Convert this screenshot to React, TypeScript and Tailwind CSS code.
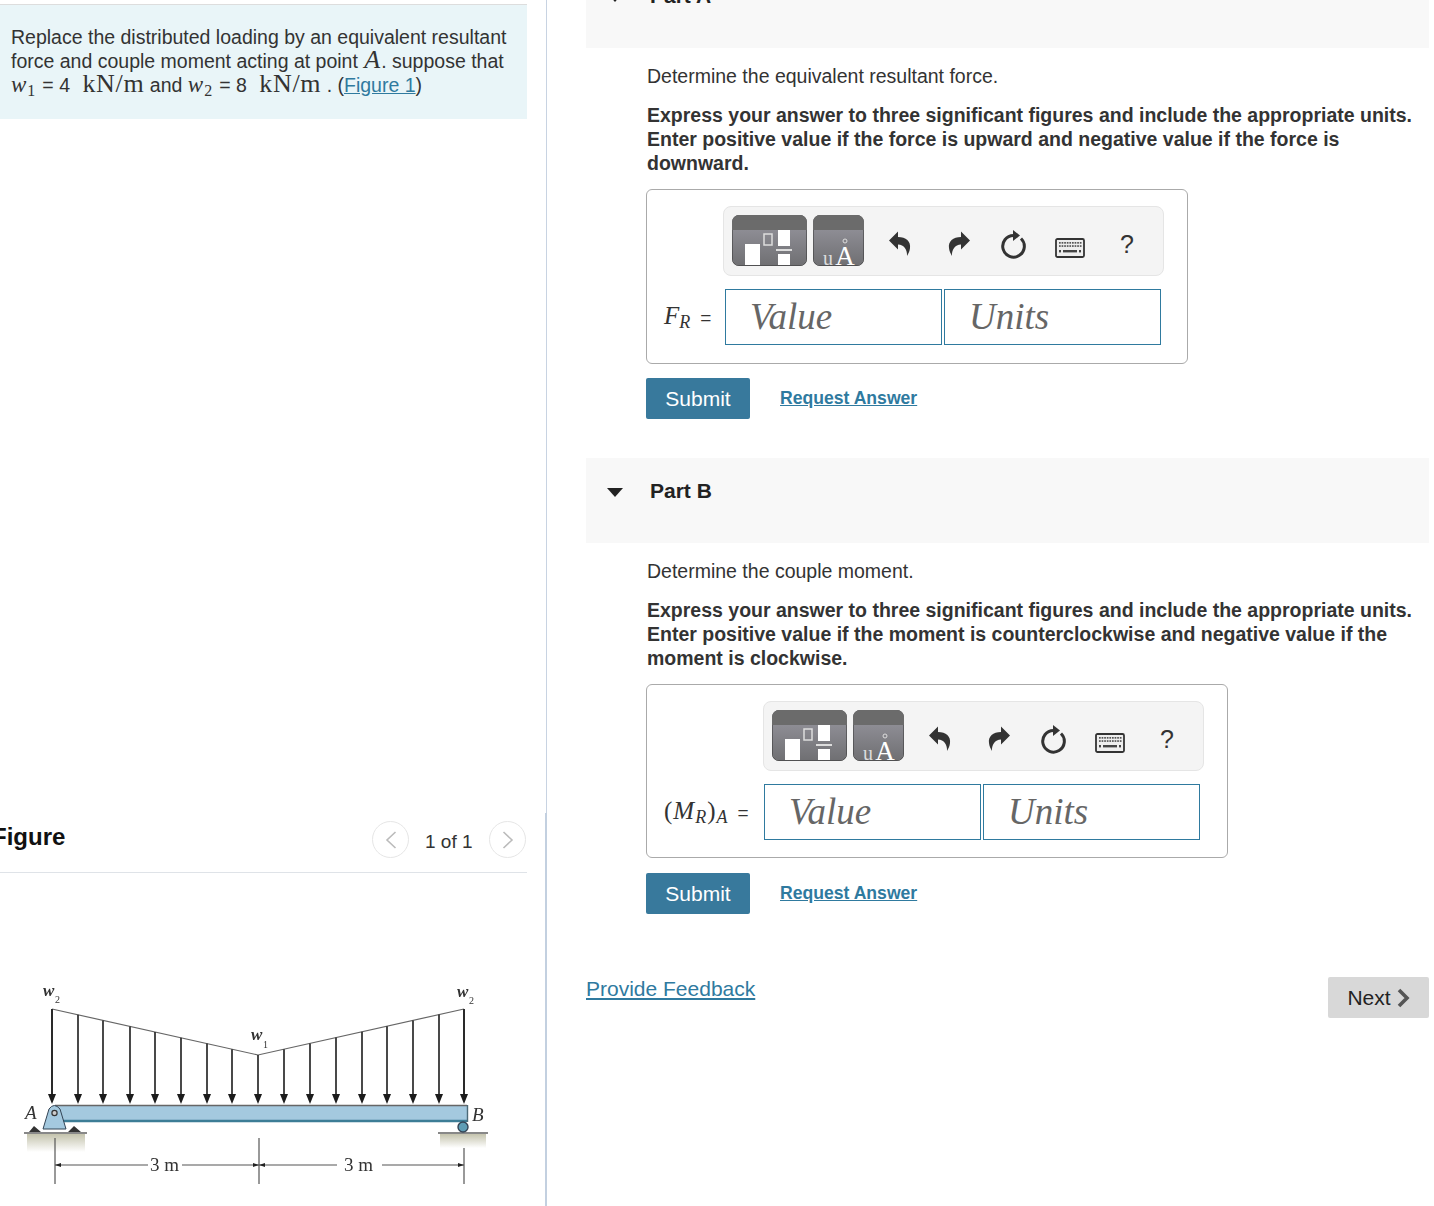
import type { ReactNode } from "react";

const SERIF = "font-['Liberation_Serif',serif]";

function UndoIcon({ flip = false }: { flip?: boolean }) {
  return (
    <svg width="22" height="26" viewBox="0 0 22 26" className={flip ? "-scale-x-100" : ""}>
      <path d="M0 9.5 L9 0.5 V6 C17 6 22 10.5 21 17 C20.7 20 19.5 22.5 18 25 C18.5 19 15 13.5 9 13.5 V18.5 Z" fill="#333" />
    </svg>
  );
}

function ResetIcon() {
  return (
    <svg width="28" height="30" viewBox="0 0 28 30">
      <path d="M13.5 6.5 A10.8 10.8 0 1 0 21 9.5" fill="none" stroke="#333" strokeWidth="3" />
      <path d="M13 1 L20 6.5 L13 12 Z" fill="#333" />
    </svg>
  );
}

function KeyboardIcon() {
  const keys = [];
  for (let i = 0; i < 9; i++) keys.push(<rect key={`a${i}`} x={4 + i * 2.6} y="4" width="1.7" height="1.7" fill="#555" />);
  for (let i = 0; i < 9; i++) keys.push(<rect key={`b${i}`} x={4 + i * 2.6} y="7.2" width="1.7" height="1.7" fill="#555" />);
  return (
    <svg width="30" height="20" viewBox="0 0 30 20">
      <rect x="1" y="1" width="28" height="18" rx="1.5" fill="#eee" stroke="#333" strokeWidth="1.8" />
      {keys}
      <rect x="4" y="12" width="2" height="2.4" fill="#444" />
      <rect x="8" y="12" width="14" height="2.4" fill="#444" />
      <rect x="24" y="12" width="2" height="2.4" fill="#444" />
    </svg>
  );
}

function TemplateButtons() {
  return (
    <div className="-mt-[2px] flex gap-[6px]">
      <svg width="75" height="51" viewBox="0 0 75 51" className="rounded-[7px]">
        <defs>
          <linearGradient id="tb" x1="0" y1="0" x2="0" y2="1">
            <stop offset="0" stopColor="#9a99a2" />
            <stop offset="1" stopColor="#6f6f72" />
          </linearGradient>
        </defs>
        <rect width="75" height="51" rx="7" fill="url(#tb)" stroke="#333" />
        <path d="M0 15 V7 A7 7 0 0 1 7 0 H68 A7 7 0 0 1 75 7 V15 Z" fill="#6b6b6b" />
        <rect x="13" y="29" width="15" height="21" fill="#fff" />
        <rect x="32" y="19" width="8" height="11" fill="none" stroke="#ddd" strokeWidth="1.5" />
        <rect x="46" y="15" width="12" height="16" fill="#fff" />
        <rect x="44" y="34" width="16" height="2" fill="#ddd" />
        <rect x="46" y="39" width="12" height="11" fill="#fff" />
      </svg>
      <svg width="51" height="51" viewBox="0 0 51 51" className="rounded-[7px]">
        <rect width="51" height="51" rx="7" fill="url(#tb)" stroke="#333" />
        <path d="M0 15 V7 A7 7 0 0 1 7 0 H44 A7 7 0 0 1 51 7 V15 Z" fill="#6b6b6b" />
        <text x="10" y="50" fontSize="20" fill="#ddd" fontFamily="Liberation Serif">u</text>
        <text x="32" y="50" fontSize="27" textAnchor="middle" fill="#fff" fontFamily="Liberation Serif">A</text>
        <circle cx="32" cy="26" r="2" fill="none" stroke="#ddd" />
      </svg>
    </div>
  );
}

function AnswerBox({ label, boxClass, labelClass, toolClass }: { label: ReactNode; boxClass: string; labelClass: string; toolClass: string }) {
  return (
    <div className={`rounded-[6px] border border-[#aaa] pt-[16px] ${boxClass}`}>
      <div className={`flex h-[70px] w-[441px] items-center rounded-[8px] border border-[#e5e5e5] bg-[#f4f4f4] pl-[8px] ${toolClass}`}>
        <TemplateButtons />
        <div className="ml-[25px] flex items-center">
          <div className="mt-[6px] w-[59px]"><UndoIcon /></div>
          <div className="mt-[6px] w-[52px]"><UndoIcon flip /></div>
          <div className="mt-[6px] w-[55px]"><ResetIcon /></div>
          <div className="mt-[14px] w-[65px]"><KeyboardIcon /></div>
          <span className="mt-[6px] text-[25px] text-[#333]">?</span>
        </div>
      </div>
      <div className="mt-[13px] flex items-center pl-[17px]">
        <div className={`whitespace-nowrap text-[#333] ${labelClass}`}>{label}</div>
        <div className="flex gap-[2px]">
          <div className={`flex h-[56px] w-[217px] items-center border border-[#2f7a9f] pl-[24px] text-[37px] text-[#666] italic ${SERIF}`}>Value</div>
          <div className={`flex h-[56px] w-[217px] items-center border border-[#2f7a9f] pl-[24px] text-[37px] text-[#666] italic ${SERIF}`}>Units</div>
        </div>
      </div>
    </div>
  );
}

function PartBar({ title }: { title: string }) {
  return (
    <div className="flex h-[85px] items-start bg-[#f8f8f8] pt-[21px] pl-[21px]">
      <div className="mt-[9px] h-0 w-0 border-x-[8px] border-t-[9px] border-x-transparent border-t-[#222]" />
      <span className="ml-[27px] text-[21px] leading-[24px] font-bold text-[#222]">{title}</span>
    </div>
  );
}

function SubmitRow({ className }: { className: string }) {
  return (
    <div className={`flex items-center pl-[60px] ${className}`}>
      <button className="h-[41px] w-[104px] rounded-[2px] bg-[#38799c] text-[21px] text-white">Submit</button>
      <a className="-mt-[2px] ml-[30px] text-[17.6px] font-bold text-[#2f7a9f] underline">Request Answer</a>
    </div>
  );
}

function BeamFigure() {
  const left = [52, 78, 103, 130, 155, 181, 207, 232, 258];
  const right = [284, 310, 336, 362, 387, 413, 439, 464];
  const topOf = (x: number) => (x <= 258 ? 1009 + ((x - 52) / 206) * 46 : 1055 - ((x - 258) / 206) * 46);
  return (
    <svg width="527" height="231" viewBox="0 975 527 231" className="mt-[102px] blur-[0.5px]">
      <defs>
        <linearGradient id="shade" x1="0" y1="0" x2="0" y2="1">
          <stop offset="0" stopColor="#c4c3ad" />
          <stop offset="1" stopColor="#ffffff" />
        </linearGradient>
      </defs>
      <path d="M52 1009 L258 1055 L464 1009" fill="none" stroke="#666" strokeWidth="1.2" />
      {[...left, ...right].map((x) => (
        <g key={x}>
          <line x1={x} y1={topOf(x)} x2={x} y2={1098} stroke="#2a2a2a" strokeWidth={x === 52 || x === 464 ? 2 : 1.7} />
          <path d={`M${x - 4} 1094 L${x + 4} 1094 L${x} 1104 Z`} fill="#1c1c1c" />
        </g>
      ))}
      <rect x="27" y="1134" width="58" height="18" fill="url(#shade)" />
      <rect x="440" y="1134" width="46" height="14" fill="url(#shade)" />
      <rect x="55" y="1105" width="412" height="17" fill="#a4c9df" />
      <line x1="55" y1="1105.5" x2="467" y2="1105.5" stroke="#666" strokeWidth="1.4" />
      <line x1="55" y1="1121" x2="467" y2="1121" stroke="#3d7d96" strokeWidth="2.4" />
      <line x1="467.5" y1="1105" x2="467.5" y2="1122" stroke="#4c6a78" strokeWidth="1.4" />
      <path d="M43 1129 L49 1109 Q54 1102 60 1109 L66 1129 Z" fill="#a4c9df" stroke="#345" strokeWidth="1" />
      <circle cx="54.5" cy="1113" r="2.6" fill="#ccc" stroke="#333" strokeWidth="1.2" />
      <path d="M29 1132 L34 1126 L41 1132 Z M68 1132 L74 1126 L81 1132 Z" fill="#333" />
      <line x1="24" y1="1133" x2="87" y2="1133" stroke="#888" strokeWidth="2" />
      <line x1="438" y1="1133" x2="488" y2="1133" stroke="#888" strokeWidth="2" />
      <circle cx="463" cy="1127" r="5" fill="#5e9db5" stroke="#345" strokeWidth="1.4" />
      <g stroke="#555" strokeWidth="1.2" fill="none">
        <line x1="55" y1="1138" x2="55" y2="1184" />
        <line x1="259" y1="1138" x2="259" y2="1184" />
        <line x1="464" y1="1148" x2="464" y2="1184" />
        <line x1="55" y1="1165" x2="148" y2="1165" />
        <line x1="182" y1="1165" x2="259" y2="1165" />
        <line x1="259" y1="1165" x2="337" y2="1165" />
        <line x1="382" y1="1165" x2="464" y2="1165" />
      </g>
      <path d="M55 1165 L61 1163 V1167 Z M259 1165 L253 1163 V1167 Z M259 1165 L265 1163 V1167 Z M464 1165 L458 1163 V1167 Z" fill="#222" />
      <g fontFamily="Liberation Serif" fill="#333">
        <text x="150" y="1171" fontSize="19">3 m</text>
        <text x="344" y="1171" fontSize="19">3 m</text>
        <text x="25" y="1119" fontSize="19" fontStyle="italic">A</text>
        <text x="472" y="1121" fontSize="19" fontStyle="italic">B</text>
        <text x="43" y="996" fontSize="17" fontStyle="italic" fontWeight="bold">w</text>
        <text x="55" y="1003" fontSize="10">2</text>
        <text x="251" y="1040" fontSize="17" fontStyle="italic" fontWeight="bold">w</text>
        <text x="263" y="1048" fontSize="10">1</text>
        <text x="457" y="997" fontSize="17" fontStyle="italic" fontWeight="bold">w</text>
        <text x="469" y="1004" fontSize="10">2</text>
      </g>
    </svg>
  );
}

function Circle({ children }: { children: ReactNode }) {
  return (
    <div className="flex h-[37px] w-[37px] items-center justify-center rounded-full border border-[#e6e6e6]">{children}</div>
  );
}

function Chevron({ flip = false }: { flip?: boolean }) {
  return (
    <svg width="12" height="18" viewBox="0 0 12 18" className={flip ? "-scale-x-100" : ""}>
      <path d="M10.5 1 L2 9 L10.5 17" fill="none" stroke="#bbb" strokeWidth="1.6" />
    </svg>
  );
}

function MathW({ n }: { n: string }) {
  return (
    <span className={`leading-[14px] ${SERIF}`}>
      <span className="text-[23px] leading-[14px] italic">w</span>
      <sub className="-bottom-[4px] ml-[1px] text-[16px] leading-[10px]">{n}</sub>
    </span>
  );
}

function KNm() {
  return <span className={`ml-[7px] text-[26px] leading-[14px] tracking-[0.7px] ${SERIF}`}>kN/m</span>;
}

export default function App() {
  return (
    <div className="flex h-[1206px] w-[1434px] overflow-hidden bg-white font-['Liberation_Sans',Arial,sans-serif] text-[19.5px] leading-[24px] text-[#333]">
      <div className="flex w-[547px] shrink-0 flex-col">
        <div className="h-[813px] border-r border-[#c8d3e2] pt-[4px] pr-[19px]">
          <div className="h-[115px] border-t border-[#ddd] bg-[#e9f5f8] pt-[20px] pl-[11px]">
            <p className="whitespace-nowrap">
              Replace the distributed loading by an equivalent resultant
              <br />
              force and couple moment acting at point <span className={`mx-[1px] text-[26px] leading-[14px] italic ${SERIF}`}>A</span>. suppose that
              <br />
              <MathW n="1" /><span className="ml-[7px]">= 4</span> <KNm /> and <MathW n="2" /><span className="ml-[7px]">= 8</span> <KNm /> . (
              <a className="text-[#2f7a9f] underline">Figure 1</a>)
            </p>
          </div>
        </div>
        <div className="flex-1 border-r-2 border-[#c3d0e0] pr-[18px]">
          <div className="mt-[8px] flex h-[52px] items-start justify-between border-b border-[#dfe3e8] pb-[13px]">
            <span className="mt-[4px] -ml-[8px] text-[24px] font-bold text-[#111]">Figure</span>
            <div className="flex items-center pr-[1px]">
              <Circle><Chevron /></Circle>
              <span className="mt-[4px] mr-[18px] ml-[16px] w-[46px] whitespace-nowrap text-[19px]">1 of 1</span>
              <Circle><Chevron flip /></Circle>
            </div>
          </div>
          <BeamFigure />
        </div>
      </div>

      <div className="ml-[39px] w-[843px] -mt-[37px] shrink-0">
        <PartBar title="Part A" />
        <div className="mt-[16px] pl-[61px]">
          <p>Determine the equivalent resultant force.</p>
          <p className="mt-[15px] font-bold">
            Express your answer to three significant figures and include the appropriate units. Enter positive value if the force is upward and negative value if the force is downward.
          </p>
          <div className="mt-[14px] -ml-px">
            <AnswerBox
              boxClass="h-[175px] w-[542px]"
              toolClass="ml-[76px]"
              labelClass="w-[61px]"
              label={
                <span className={`text-[25px] italic ${SERIF}`}>
                  F<sub className="-bottom-[4px] text-[18px] leading-none">R</sub>
                  <span className="ml-[10px] font-['Liberation_Sans'] text-[19px] not-italic">=</span>
                </span>
              }
            />
          </div>
        </div>
        <SubmitRow className="mt-[14px]" />

        <div className="mt-[39px]">
          <PartBar title="Part B" />
        </div>
        <div className="mt-[16px] pl-[61px]">
          <p>Determine the couple moment.</p>
          <p className="mt-[15px] font-bold">
            Express your answer to three significant figures and include the appropriate units. Enter positive value if the moment is counterclockwise and negative value if the moment is clockwise.
          </p>
          <div className="mt-[14px] -ml-px">
            <AnswerBox
              boxClass="h-[174px] w-[582px]"
              toolClass="ml-[116px]"
              labelClass="w-[100px]"
              label={
                <span className={`text-[25px] tracking-[1px] italic ${SERIF}`}>
                  <span className="not-italic">(</span>M<sub className="-bottom-[4px] text-[18px] leading-none">R</sub><span className="not-italic">)</span>
                  <sub className="-bottom-[4px] text-[18px] leading-none">A</sub>
                  <span className="ml-[9px] font-['Liberation_Sans'] text-[19px] not-italic">=</span>
                </span>
              }
            />
          </div>
        </div>
        <SubmitRow className="mt-[15px]" />

        <div className="mt-[63px] flex items-start justify-between">
          <a className="text-[21px] text-[#2f7a9f] underline">Provide Feedback</a>
          <button className="flex h-[41px] w-[101px] items-center justify-center gap-[5px] rounded-[2px] bg-[#d8d8d8] text-[21px] text-[#222]">
            Next
            <svg width="14" height="20" viewBox="0 0 14 20">
              <path d="M3 2 L11 10 L3 18" fill="none" stroke="#555" strokeWidth="3.6" />
            </svg>
          </button>
        </div>
      </div>
    </div>
  );
}
